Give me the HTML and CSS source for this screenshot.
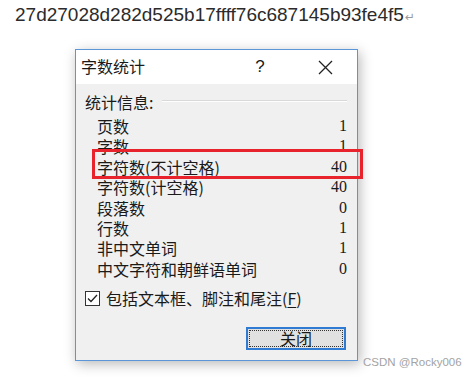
FILE: index.html
```html
<!DOCTYPE html>
<html lang="zh-CN">
<head>
<meta charset="utf-8">
<title>字数统计</title>
<link rel="stylesheet" href="styles.css">
</head>
<body>
<div class="page">
  <p class="hex">27d27028d282d525b17ffff76c687145b93fe4f5<span class="ret">↵</span></p>
  <div class="dialog">
    <div class="titlebar">
      <span class="title">字数统计</span>
      <span class="help">?</span>
      <span class="close">
        <svg width="15" height="15" viewBox="0 0 15 15"><path d="M1 1L14 14M14 1L1 14" stroke="#222" stroke-width="1.3" fill="none"/></svg>
      </span>
    </div>
    <div class="body">
      <div class="group">
        <span class="group-label">统计信息:</span>
        <span class="group-line"></span>
      </div>
      <ul class="stats">
        <li><span>页数</span><span class="num">1</span></li>
        <li><span>字数</span><span class="num">1</span></li>
        <li><span>字符数(不计空格)</span><span class="num">40</span></li>
        <li><span>字符数(计空格)</span><span class="num">40</span></li>
        <li><span>段落数</span><span class="num">0</span></li>
        <li><span>行数</span><span class="num">1</span></li>
        <li><span>非中文单词</span><span class="num">1</span></li>
        <li><span>中文字符和朝鲜语单词</span><span class="num">0</span></li>
      </ul>
      <div class="check">
        <span class="box"><svg width="13" height="13" viewBox="0 0 13 13"><path d="M2 6.5L5 9.5L11 3" stroke="#222" stroke-width="1.3" fill="none"/></svg></span>
        <span>包括文本框、脚注和尾注(<u>F</u>)</span>
      </div>
      <div class="actions">
        <button class="btn"><span class="focus">关闭</span></button>
      </div>
    </div>
    <div class="highlight"></div>
  </div>
  <div class="watermark">CSDN @Rocky006</div>
</div>
</body>
</html>
```
FILE: styles.css
```css
html, body {
  margin: 0;
  padding: 0;
  background: #ffffff;
}
.page {
  position: relative;
  width: 474px;
  height: 377px;
  overflow: hidden;
  font-family: "Noto Sans CJK SC", sans-serif;
}
.hex {
  margin: 0;
  padding: 5px 0 0 15px;
  height: 20px;
  line-height: 20px;
  font-family: "Liberation Sans", Arial, sans-serif;
  font-size: 19px;
  color: #2b2b2b;
  white-space: nowrap;
}
.ret {
  font-family: "DejaVu Sans", sans-serif;
  font-size: 12px;
  color: #9a9a9a;
  margin-left: 1px;
}
.dialog {
  position: relative;
  margin: 24px 0 0 75px;
  width: 281px;
  height: 310px;
  border: 1px solid #5b97d8;
  background: #f0f0f0;
  box-shadow: 2px 3px 12px rgba(0, 0, 0, 0.28);
  display: flex;
  flex-direction: column;
}
.titlebar {
  height: 34px;
  background: #ffffff;
  display: flex;
  align-items: center;
  font-size: 16px;
  color: #1a1a1a;
}
.title {
  padding: 0 0 2px 5px;
  flex: 1;
  line-height: 20px;
}
.help {
  font-family: "Liberation Sans", Arial, sans-serif;
  font-size: 17px;
  width: 14px;
  text-align: center;
  margin-right: 51px;
}
.close {
  width: 15px;
  height: 15px;
  display: flex;
  margin-right: 24px;
}
.body {
  flex: 1;
  display: flex;
  flex-direction: column;
  padding: 8px 10px 0 9px;
  font-size: 16px;
  color: #1a1a1a;
}
.group {
  display: flex;
  align-items: center;
  height: 20px;
  line-height: 20px;
}
.group-label {
  margin-right: 9px;
}
.group-line {
  flex: 1;
  height: 0;
  border-top: 1px solid #d8d8d8;
  border-bottom: 1px solid #ffffff;
  margin-top: -3px;
}
.stats {
  list-style: none;
  margin: 4px 0 0 0;
  padding: 0 0 0 12px;
}
.stats li {
  display: flex;
  justify-content: space-between;
  height: 20.4px;
  line-height: 20.4px;
}
.num {
  font-family: "Liberation Serif", "Times New Roman", serif;
  font-size: 16px;
}
.check {
  display: flex;
  align-items: center;
  gap: 6px;
  margin-top: 9px;
  height: 20px;
  line-height: 20px;
}
.box {
  width: 15px;
  height: 15px;
  border: 1px solid #333333;
  background: #ffffff;
  box-sizing: border-box;
  display: flex;
  align-items: center;
  justify-content: center;
}
.check u {
  text-decoration: underline;
  text-underline-offset: 2px;
}
.actions {
  display: flex;
  justify-content: flex-end;
  margin-top: 19px;
  padding-right: 1px;
}
.btn {
  width: 100px;
  height: 23px;
  padding: 1px;
  border: 2px solid #2f7ad3;
  background: #e1e1e1;
  display: flex;
  box-sizing: border-box;
  font-family: "Noto Sans CJK SC", sans-serif;
  font-size: 16px;
  color: #1a1a1a;
}
.focus {
  flex: 1;
  border: 1px dotted #333333;
  display: flex;
  align-items: center;
  justify-content: center;
  line-height: 15px;
}
.highlight {
  position: absolute;
  left: 16px;
  top: 99px;
  width: 265px;
  height: 24px;
  border: 3px solid #e8232c;
}
.watermark {
  position: absolute;
  left: 363px;
  top: 354px;
  font-family: "Liberation Sans", Arial, sans-serif;
  font-size: 11.5px;
  color: #a3a3a3;
  line-height: 16px;
}
```
